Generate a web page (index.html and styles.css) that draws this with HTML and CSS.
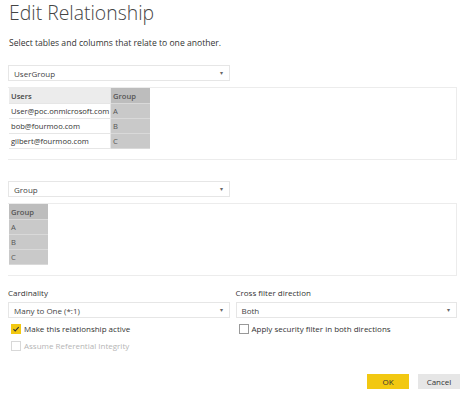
FILE: index.html
```html
<!DOCTYPE html>
<html>
<head>
<meta charset="utf-8">
<link rel="stylesheet" href="styles.css">
</head>
<body>
<div class="dialog">
  <h1 class="title">Edit Relationship</h1>
  <p class="subtitle">Select tables and columns that relate to one another.</p>

  <div class="select wide"><span>UserGroup</span><span class="caret">▾</span></div>
  <div class="preview">
    <table class="grid">
      <tr><th class="c1">Users</th><th class="sel">Group</th></tr>
      <tr><td class="c1">User@poc.onmicrosoft.com</td><td class="sel">A</td></tr>
      <tr><td class="c1">bob@fourmoo.com</td><td class="sel">B</td></tr>
      <tr><td class="c1">gilbert@fourmoo.com</td><td class="sel">C</td></tr>
    </table>
  </div>

  <div class="select wide second"><span>Group</span><span class="caret">▾</span></div>
  <div class="preview">
    <table class="grid">
      <tr><th class="sel g">Group</th></tr>
      <tr><td class="sel g">A</td></tr>
      <tr><td class="sel g">B</td></tr>
      <tr><td class="sel g">C</td></tr>
    </table>
  </div>

  <div class="options">
    <div class="col">
      <div class="label">Cardinality</div>
      <div class="select"><span>Many to One (*:1)</span><span class="caret">▾</span></div>
      <label class="check"><span class="box on"><svg viewBox="0 0 10 10" width="10" height="10"><path d="M1.8 5.2 L4 7.4 L8.4 2.6" fill="none" stroke="#333" stroke-width="1.4"/></svg></span>Make this relationship active</label>
      <label class="check disabled"><span class="box"></span>Assume Referential Integrity</label>
    </div>
    <div class="col">
      <div class="label">Cross filter direction</div>
      <div class="select"><span>Both</span><span class="caret">▾</span></div>
      <label class="check"><span class="box"></span>Apply security filter in both directions</label>
    </div>
  </div>

  <div class="buttons">
    <button class="btn ok">OK</button>
    <button class="btn cancel">Cancel</button>
  </div>
</div>
</body>
</html>
```
FILE: styles.css
```css
html, body {
  margin: 0;
  padding: 0;
  background: #fff;
}
body {
  font-family: "Open Sans", "Noto Sans", sans-serif;
  color: #333;
  width: 474px;
  height: 399px;
  overflow: hidden;
}
.dialog {
  padding: 0 17px 0 8px;
}
.title {
  margin: 0;
  padding: 1px 0 0 1px;
  font-weight: 300;
  font-size: 19.4px;
  line-height: 24px;
  color: #444;
}
.subtitle {
  margin: 12px 0 0 1px;
  font-size: 8.6px;
  line-height: 12px;
  color: #333;
}
.select {
  box-sizing: border-box;
  height: 16px;
  border: 1px solid #e6e6e6;
  display: flex;
  align-items: center;
  justify-content: space-between;
  padding: 0 6px 0 5px;
  font-size: 8px;
  color: #444;
  background: #fff;
}
.select.wide {
  width: 222px;
  margin-top: 16px;
}
.select.second {
  margin-top: 21px;
}
.caret {
  font-size: 6px;
  color: #666;
}
.preview {
  box-sizing: border-box;
  margin-top: 6px;
  height: 73px;
  border: 1px solid #ececec;
  border-left: none;
  padding: 0 0 0 1px;
}
.grid {
  border-collapse: collapse;
  font-size: 7.6px;
}
.grid th, .grid td {
  height: 14px;
  padding: 0 0 0 2px;
  text-align: left;
  border-bottom: 1px solid #e6e6e6;
  white-space: nowrap;
}
.grid th {
  height: 15px;
  font-weight: 600;
  color: #444;
}
.grid .c1 {
  width: 99px;
  background: #fff;
  border-right: 1px solid #e6e6e6;
}
.grid th.c1 {
  background: #ececec;
}
.grid .sel {
  width: 37px;
  background: #c9c9c9;
  color: #555;
  border-bottom-color: #d9d9d9;
}
.grid th.sel {
  background: #bdbdbd;
}
.grid .g {
  width: 37px;
}
.options {
  display: flex;
  gap: 6px;
  margin-top: 11px;
}
.col {
  flex: 1;
  display: flex;
  flex-direction: column;
}
.label {
  font-size: 8px;
  line-height: 12px;
  color: #333;
  margin-bottom: 3px;
}
.check {
  display: flex;
  align-items: center;
  font-size: 8px;
  line-height: 12px;
  color: #333;
  margin-top: 5px;
  padding-left: 3px;
}
.check + .check {
  margin-top: 5px;
}
.check.disabled {
  color: #b5b5b5;
}
.box {
  box-sizing: border-box;
  width: 10px;
  height: 10px;
  border: 1px solid #999;
  margin-right: 3px;
  display: flex;
  align-items: center;
  justify-content: center;
  background: #fff;
}
.box.on {
  background: #f2c811;
  border-color: #f2c811;
}
.box svg {
  display: block;
}
.check.disabled .box {
  border-color: #d8d8d8;
}
.buttons {
  display: flex;
  justify-content: flex-end;
  gap: 9px;
  margin-top: 22px;
  margin-right: -3px;
}
.btn {
  width: 42px;
  height: 15px;
  border: none;
  font-family: inherit;
  font-size: 8px;
  color: #333;
  padding: 0;
}
.ok {
  background: #f2c811;
}
.cancel {
  background: #e6e6e6;
}
```
